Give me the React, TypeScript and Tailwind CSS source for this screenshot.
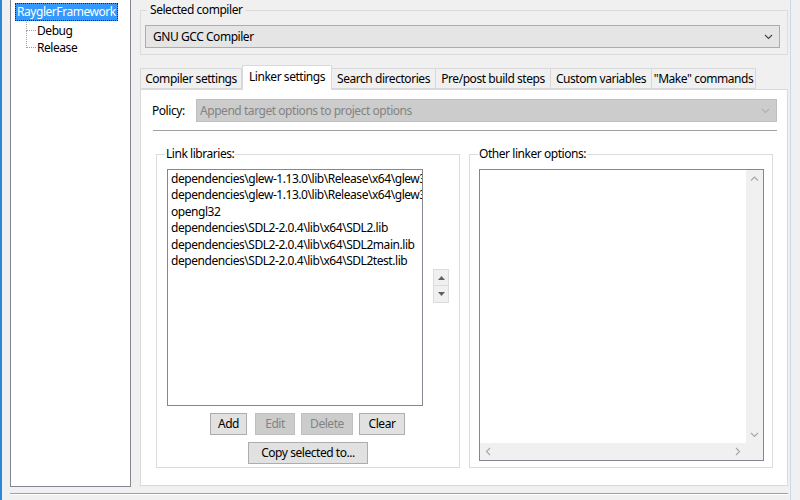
import React from "react";

const font = "font-['Noto_Sans',sans-serif] tracking-[-0.45px]";

function Chevron({ dir = "down", color = "#555", size = 9 }: { dir?: "down" | "up" | "left" | "right"; color?: string; size?: number }) {
  const pts: Record<string, string> = {
    down: "1,3 4.5,6.5 8,3",
    up: "1,6.5 4.5,3 8,6.5",
    left: "6,1 2.5,4.5 6,8",
    right: "3,1 6.5,4.5 3,8",
  };
  return (
    <svg width={size} height={size} viewBox="0 0 9 9" className="shrink-0">
      <polyline points={pts[dir]} fill="none" stroke={color} strokeWidth="1.1" />
    </svg>
  );
}

function Tri({ up }: { up?: boolean }) {
  return (
    <svg width="7" height="4" viewBox="0 0 7 4">
      <polygon points={up ? "0,4 3.5,0 7,4" : "0,0 3.5,4 7,0"} fill="#606060" />
    </svg>
  );
}

function Btn({ label, w, disabled }: { label: string; w: string; disabled?: boolean }) {
  return (
    <div
      className={`${w} h-[22px] flex items-center justify-center border text-[12px] whitespace-nowrap ${
        disabled ? "bg-[#cccccc] border-[#bfbfbf] text-[#838383]" : "bg-[#e1e1e1] border-[#adadad] text-black"
      }`}
    >
      {label}
    </div>
  );
}

const libs = [
  "dependencies\\glew-1.13.0\\lib\\Release\\x64\\glew32.lib",
  "dependencies\\glew-1.13.0\\lib\\Release\\x64\\glew32s.lib",
  "opengl32",
  "dependencies\\SDL2-2.0.4\\lib\\x64\\SDL2.lib",
  "dependencies\\SDL2-2.0.4\\lib\\x64\\SDL2main.lib",
  "dependencies\\SDL2-2.0.4\\lib\\x64\\SDL2test.lib",
];

const tabs: { label: string; w: string; sel?: boolean }[] = [
  { label: "Compiler settings", w: "w-[102px]" },
  { label: "Linker settings", w: "w-[90px]", sel: true },
  { label: "Search directories", w: "w-[105px]" },
  { label: "Pre/post build steps", w: "w-[116px]" },
  { label: "Custom variables", w: "w-[102px]" },
  { label: "\"Make\" commands", w: "w-[105px]" },
];

export default function App() {
  return (
    <div className={`${font} w-[800px] h-[500px] bg-[#f0f0f0] flex overflow-hidden text-[12px] text-black`}>
      <div className="w-[2px] h-full bg-[#2b88d8]" />
      <div className="ml-[8px] w-[778px] flex flex-col">
        <div className="flex h-[487px]">
          {/* Tree */}
          <div className="w-[121px] h-full bg-white border border-t-0 border-[#828790]">
            <div className="mt-[3px] ml-[4px] inline-flex items-center h-[18px] px-[1px] bg-[#3399ff] text-white border border-dotted border-[#0a2a55] leading-none whitespace-nowrap">
              RayglerFramework
            </div>
            <div className="flex flex-col ml-[15px] mt-[1px]">
              <div className="flex items-center h-[17px]">
                <div className="w-[10px] h-[9px] border-l border-b border-dotted border-[#a0a0a0] -mt-[8px]" />
                <span className="ml-[1px]">Debug</span>
              </div>
              <div className="flex items-center h-[17px]">
                <div className="w-[10px] h-[17px] border-l border-b border-dotted border-[#a0a0a0] -mt-[17px]" />
                <span className="ml-[1px]">Release</span>
              </div>
            </div>
          </div>

          {/* Right column */}
          <div className="ml-[9px] w-[648px] flex flex-col">
            <fieldset className="mt-[2px] border border-[#dcdcdc] pl-[4px] pr-[7px] pb-[6px]">
              <legend className="ml-[2px] px-[3px] leading-[16px]">Selected compiler</legend>
              <div className="mt-[7px] h-[23px] bg-[#e5e5e5] border border-[#adadad] flex items-center pl-[7px] pr-[6px]">
                <span className="flex-1">GNU GCC Compiler</span>
                <Chevron color="#444" />
              </div>
            </fieldset>

            {/* Tabs */}
            <div className="mt-[10px] flex items-end h-[24px]">
              {tabs.map((t) =>
                t.sel ? (
                  <div
                    key={t.label}
                    className={`${t.w} h-[25px] -mb-px bg-white border border-b-0 border-[#d9d9d9] flex items-start justify-center pt-[2px] relative z-10 whitespace-nowrap`}
                  >
                    {t.label}
                  </div>
                ) : (
                  <div
                    key={t.label}
                    className={`${t.w} h-[21px] bg-[#f0f0f0] border border-[#d9d9d9] -ml-px first:ml-0 flex items-center justify-center whitespace-nowrap`}
                  >
                    {t.label}
                  </div>
                )
              )}
            </div>

            {/* Panel */}
            <div className="h-[397px] bg-white border border-[#d9d9d9] flex flex-col">
              <div className="mt-[9px] ml-[11px] mr-[10px] flex items-center h-[23px]">
                <span className="w-[44px]">Policy:</span>
                <div className="flex-1 h-[23px] bg-[#cccccc] border border-[#bfbfbf] flex items-center pl-[3px] pr-[6px] text-[#838383]">
                  <span className="flex-1">Append target options to project options</span>
                  <Chevron color="#b0b0b0" />
                </div>
              </div>
              <div className="mt-[8px] ml-[12px] mr-[10px] h-[2px] border-t border-[#a0a0a0] border-b border-b-white" />

              <div className="mt-[14px] ml-[15px] mr-[15px] flex gap-[9px] h-[322px]">
                {/* Link libraries */}
                <fieldset className="w-[305px] border border-[#dcdcdc] pl-[10px] pr-[10px] pb-[3px] flex flex-col">
                  <legend className="ml-[-2px] px-[1px] leading-[16px]">Link libraries:</legend>
                  <div className="mt-[7px] flex items-center">
                    <div className="w-[256px] h-[237px] border border-[#828790] bg-white overflow-hidden pl-[3px] pt-[1px] leading-[16.4px] whitespace-nowrap">
                      {libs.map((l) => (
                        <div key={l}>{l}</div>
                      ))}
                    </div>
                    <div className="ml-[10px] flex flex-col -mt-[3px]">
                      <div className="w-[16px] h-[17px] bg-[#f0f0f0] border border-[#dcdcdc] flex items-center justify-center">
                        <Tri up />
                      </div>
                      <div className="w-[16px] h-[17px] bg-[#f0f0f0] border border-[#dcdcdc] border-t-0 flex items-center justify-center">
                        <Tri />
                      </div>
                    </div>
                  </div>
                  <div className="mt-[7px] flex justify-center">
                    <div className="flex ml-[-1px]">
                      <Btn label="Add" w="w-[37px]" />
                      <div className="ml-[8px]">
                        <Btn label="Edit" w="w-[40px]" disabled />
                      </div>
                      <div className="ml-[6px]">
                        <Btn label="Delete" w="w-[52px]" disabled />
                      </div>
                      <div className="ml-[6px]">
                        <Btn label="Clear" w="w-[46px]" />
                      </div>
                    </div>
                  </div>
                  <div className="mt-[7px] flex justify-center">
                    <Btn label="Copy selected to..." w="w-[120px]" />
                  </div>
                </fieldset>

                {/* Other linker options */}
                <fieldset className="w-[304px] border border-[#dcdcdc] pl-[9px] pr-[8px] flex flex-col">
                  <legend className="ml-[-1px] px-[1px] leading-[16px]">Other linker options:</legend>
                  <div className="mt-[7px] w-[285px] h-[292px] border border-[#828790] bg-white flex flex-col">
                    <div className="flex flex-1">
                      <div className="flex-1" />
                      <div className="w-[17px] bg-[#f0f0f0] flex flex-col items-center justify-between py-[4px]">
                        <Chevron dir="up" color="#a6a6a6" />
                        <Chevron dir="down" color="#a6a6a6" />
                      </div>
                    </div>
                    <div className="h-[17px] flex">
                      <div className="flex-1 bg-[#f0f0f0] flex items-center justify-between px-[4px]">
                        <Chevron dir="left" color="#a6a6a6" />
                        <Chevron dir="right" color="#a6a6a6" />
                      </div>
                      <div className="w-[17px] bg-[#f0f0f0]" />
                    </div>
                  </div>
                </fieldset>
              </div>
            </div>
          </div>
        </div>
        <div className="mt-[6px] h-[2px] border-t border-[#a0a0a0] border-b border-b-white" />
      </div>
      <div className="ml-[2px] w-[1px] h-full bg-[#c9d9e9]" />
    </div>
  );
}
